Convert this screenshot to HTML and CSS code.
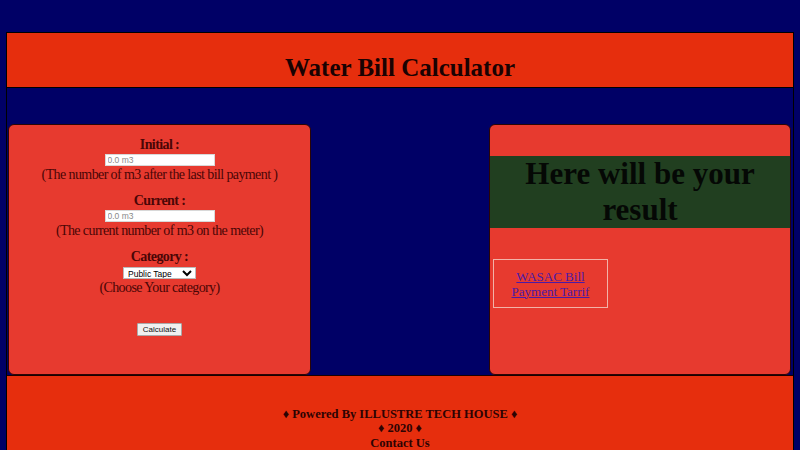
FILE: index.html
```html
<!DOCTYPE html>
<html lang="en">
<head>
    <meta charset="UTF-8">
    <meta name="viewport" content="width=device-width, initial-scale=1.0">
    <title>Water Bill Calculator</title>
    <link rel="stylesheet" href="styles.css">
</head>
<body>
    <div class="page">
        <header class="top-bar">
            <h1>Water Bill Calculator</h1>
        </header>

        <main class="panels">
            <form class="card calc-form" onsubmit="return false">
                <div class="field">
                    <label for="initial">Initial :</label>
                    <input type="text" id="initial" placeholder="0.0 m3">
                    <span class="hint">(The number of m3 after the last bill payment )</span>
                </div>
                <div class="field">
                    <label for="current">Current :</label>
                    <input type="text" id="current" placeholder="0.0 m3">
                    <span class="hint">(The current number of m3 on the meter)</span>
                </div>
                <div class="field">
                    <label for="category">Category :</label>
                    <select id="category">
                        <option>Public Tape</option>
                        <option>Residential</option>
                        <option>Non Residential</option>
                        <option>Industries</option>
                    </select>
                    <span class="hint">(Choose Your category)</span>
                </div>
                <button type="button" class="calc-btn">Calculate</button>
            </form>

            <section class="card result-card">
                <h2 class="result">Here will be your result</h2>
                <div class="tariff-box">
                    <a href="#">WASAC Bill<br>Payment Tarrif</a>
                </div>
            </section>
        </main>

        <footer class="bottom-bar">
            <p>&#9830; Powered By ILLUSTRE TECH HOUSE &#9830;</p>
            <p>&#9830; 2020 &#9830;</p>
            <p>Contact Us</p>
        </footer>
    </div>
</body>
</html>
```

FILE: styles.css
```css
body {
    margin: 0;
    background-color: #000066;
    font-family: "Liberation Serif", "Times New Roman", serif;
}

.page {
    margin: 32px 0 0 6px;
    width: 786px;
    border: 1px solid #000;
    border-bottom: none;
}

.top-bar {
    height: 55px;
    background-color: #e62e0d;
    border-bottom: 1px solid #000;
    box-sizing: border-box;
    padding-top: 20px;
    text-align: center;
}

.top-bar h1 {
    margin: 0;
    font-size: 25px;
    line-height: 29px;
    color: #1a0202;
}

.panels {
    display: flex;
    justify-content: space-between;
    margin-top: 36px;
    padding: 0 2px 0 1px;
}

.card {
    box-sizing: border-box;
    height: 251px;
    background-color: #e73a2f;
    border: 1px solid #2a0505;
    border-radius: 6px;
    overflow: hidden;
}

/* calculator form */
.calc-form {
    width: 303px;
    padding-top: 12px;
    display: flex;
    flex-direction: column;
    align-items: center;
    color: #4a0606;
    font-size: 14px;
    letter-spacing: -0.6px;
}

.field {
    display: flex;
    flex-direction: column;
    align-items: center;
    margin-bottom: 11px;
}

.field label {
    font-weight: bold;
    line-height: 15px;
}

.field input {
    box-sizing: border-box;
    width: 110px;
    height: 12px;
    margin: 2px 0 1px;
    padding: 0 2px;
    border: 1px solid #d8d8d8;
    background: #fff;
    font-family: "Liberation Sans", Arial, sans-serif;
    font-size: 8.5px;
    letter-spacing: 0;
}

.field input::placeholder {
    color: #8a8a8a;
}

.field select {
    box-sizing: border-box;
    width: 73px;
    height: 12px;
    margin: 3px 0 1px;
    padding: 0;
    border: 1px solid #bbb;
    background: #fff;
    font-family: "Liberation Sans", Arial, sans-serif;
    font-size: 8.5px;
    letter-spacing: 0;
}

.hint {
    line-height: 15px;
}

.calc-btn {
    margin-top: 17px;
    height: 13px;
    padding: 0 5px;
    border: 1px solid #aaa;
    border-radius: 1px;
    background: #f0f0f0;
    font-family: "Liberation Sans", Arial, sans-serif;
    font-size: 8px;
    line-height: 11px;
    letter-spacing: 0;
    color: #111;
}

/* result panel */
.result-card {
    width: 302px;
}

.result {
    margin: 31px 0 0;
    background-color: #213f20;
    text-align: center;
    font-size: 31px;
    line-height: 36px;
    color: #050805;
}

.tariff-box {
    box-sizing: border-box;
    width: 115px;
    margin: 31px 0 0 3px;
    padding: 8.5px 0;
    border: 1px solid #f2b3a8;
    text-align: center;
    font-size: 13px;
    line-height: 15px;
}

.tariff-box a {
    color: #4b1aa6;
}

.bottom-bar {
    height: 80px;
    padding-top: 31px;
    background-color: #e62e0d;
    border-top: 1px solid #1a0000;
    text-align: center;
    font-weight: bold;
    font-size: 12.5px;
    line-height: 14.4px;
    color: #2d0303;
}

.bottom-bar p {
    margin: 0;
}
```
